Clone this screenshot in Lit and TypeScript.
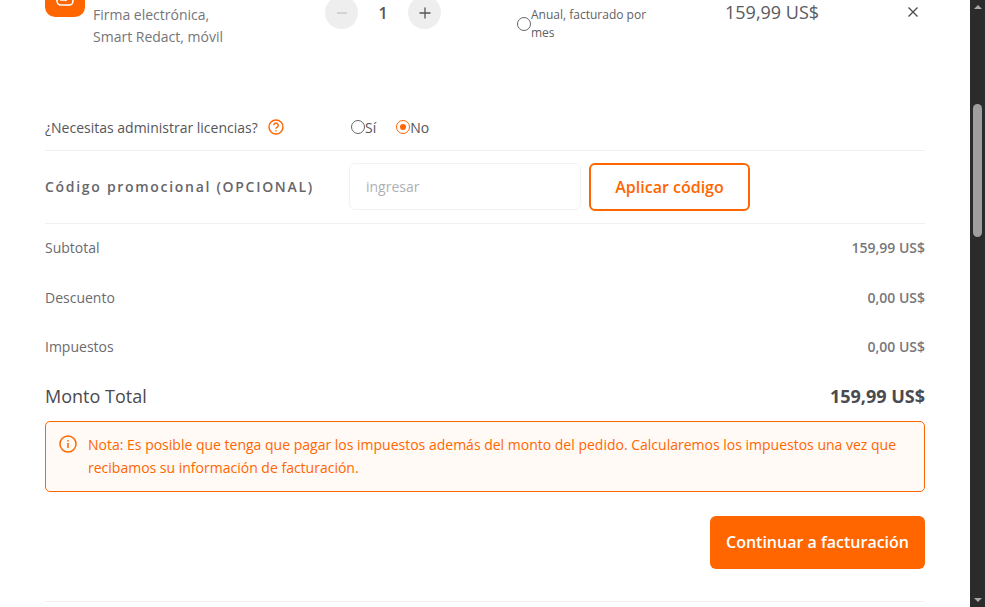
import { LitElement, html, css } from "lit";
import { customElement } from "lit/decorators.js";

@customElement("app-root")
export class AppRoot extends LitElement {
  static styles = css`
    :host { display: flex; width: 985px; height: 607px; overflow: hidden; background: #fff; font-family: "Open Sans", sans-serif; color: #4a4a4f; }
    * { box-sizing: border-box; }
    .page { width: 970px; height: 607px; padding: 0 45px; overflow: hidden; flex: none; }
    .item { height: 104px; display: flex; align-items: flex-start; overflow: visible; }
    .logo { width: 40px; height: 40px; margin-top: -23px; border-radius: 10px; background: #ff6600; flex: none; display: flex; align-items: flex-end; justify-content: center; padding-bottom: 11px; }
    .desc { width: 232px; margin: 4px 0 0 8px; font-size: 14px; line-height: 22px; color: #75757a; flex: none; }
    .qty { display: flex; align-items: center; margin-top: -4px; width: 192px; flex: none; }
    .qbtn { width: 33px; height: 33px; border-radius: 50%; background: #eeeeee; display: flex; align-items: center; justify-content: center; flex: none; }
    .qval { width: 50px; text-align: center; font-size: 16px; font-weight: 600; color: #55555a; }
    .plan { display: flex; align-items: center; width: 208px; flex: none; margin-top: 6px; font-size: 12px; line-height: 18px; color: #5f5f64; }
    .plan span { width: 125px; }
    .radio { width: 14px; height: 14px; border-radius: 50%; border: 1px solid #66666b; flex: none; background: #fff; }
    .price { width: 182px; flex: none; font-size: 18px; line-height: 24px; color: #5a5a5f; }
    .close { flex: none; margin-top: 6px; display: flex; }
    .lic { height: 47px; display: flex; align-items: center; border-bottom: 1px solid #f0f0f0; font-size: 14px; color: #55555a; }
    .lic-label { width: 306px; display: flex; align-items: center; gap: 10px; flex: none; }
    .opt { display: flex; align-items: center; margin-right: 20px; }
    .radio.on { border-color: #ff6600; display: flex; align-items: center; justify-content: center; }
    .radio.on::after { content: ""; width: 6px; height: 6px; border-radius: 50%; background: #ff6600; }
    .promo { height: 73px; display: flex; align-items: flex-start; padding-top: 12px; border-bottom: 1px solid #f0f0f0; }
    .promo-label { width: 304px; flex: none; align-self: center; margin-top: -14px; font-size: 14px; font-weight: 600; letter-spacing: 1.7px; color: #66666b; }
    .input { width: 232px; height: 47px; border: 1px solid #f2f2f2; border-radius: 6px; padding-left: 16px; display: flex; align-items: center; font-size: 14px; color: #b0b0b4; flex: none; }
    .apply { width: 161px; height: 48px; margin-left: 8px; border: 2px solid #ff6600; border-radius: 6px; color: #ff6600; font-size: 16px; font-weight: 600; display: flex; align-items: center; justify-content: center; flex: none; }
    .rows { margin-top: -1px; }
    .row { height: 49.5px; display: flex; align-items: center; justify-content: space-between; font-size: 14px; color: #6b6b70; }
    .row b { font-size: 14px; font-weight: 600; color: #77777c; }
    .row.total { height: 49px; font-size: 18px; color: #4a4a4f; }
    .row.total b { font-size: 18px; font-weight: 700; color: #4a4a4f; }
    .note { height: 71px; border: 1px solid #ff6600; border-radius: 5px; background: #fffaf6; display: flex; gap: 11px; padding: 11px 12px 0 13px; font-size: 14px; line-height: 23px; color: #ff6600; }
    .note svg { flex: none; margin-top: 2px; }
    .actions { display: flex; justify-content: flex-end; padding-top: 24px; height: 110px; border-bottom: 1px solid #f0f0f0; }
    .go { width: 215px; height: 53px; background: #ff6600; border-radius: 6px; color: #fff; font-size: 16px; font-weight: 600; display: flex; align-items: center; justify-content: center; }
    .bar { width: 15px; height: 607px; background: #2b2b2b; flex: none; display: flex; flex-direction: column; align-items: center; justify-content: space-between; padding: 5px 0; }
    .thumb { width: 9px; height: 133px; border-radius: 5px; background: #9f9f9f; margin-top: 95px; }
    .grow { flex: 1; }
    .arrow { width: 0; height: 0; border-left: 4px solid transparent; border-right: 4px solid transparent; }
    .arrow.up { border-bottom: 4px solid #a8a8a8; }
    .arrow.down { border-top: 4px solid #a8a8a8; }
  `;

  render() {
    return html`
      <div class="page">
        <div class="item">
          <div class="logo">
            <svg width="20" height="14" viewBox="0 0 20 14" fill="none" stroke="#fff" stroke-width="1.6"><path d="M2 0v9a4 4 0 0 0 4 4h8a4 4 0 0 0 4-4V0"/><path d="M5 8h6M14 3l-3.500 6"/></svg>
          </div>
          <div class="desc">Firma electrónica,<br />Smart Redact, móvil</div>
          <div class="qty">
            <div class="qbtn"><svg width="12" height="12" viewBox="0 0 12 12" stroke="#c4c4c4" stroke-width="1.3"><path d="M1 6h10"/></svg></div>
            <div class="qval">1</div>
            <div class="qbtn"><svg width="12" height="12" viewBox="0 0 12 12" stroke="#55555a" stroke-width="1.3"><path d="M0.500 6h11M6 .5v11"/></svg></div>
          </div>
          <div class="plan"><div class="radio"></div><span>Anual, facturado por mes</span></div>
          <div class="price">159,99 US$</div>
          <div class="close"><svg width="12" height="12" viewBox="0 0 12 12" stroke="#4a4a4f" stroke-width="1.3"><path d="M1.500 1.500l9 9M10.500 1.500l-9 9"/></svg></div>
        </div>
        <div class="lic">
          <div class="lic-label">¿Necesitas administrar licencias?
            <svg width="16" height="16" viewBox="0 0 16 16" fill="none" stroke="#ff6600" stroke-width="1.4"><circle cx="8" cy="8" r="7"/><path d="M5.800 6.200a2.200 2.200 0 1 1 3.400 1.900c-.8.500-1.200.9-1.200 1.700"/><path d="M8 11.200v1.200"/></svg>
          </div>
          <div class="opt"><div class="radio"></div>Sí</div>
          <div class="opt"><div class="radio on"></div>No</div>
        </div>
        <div class="promo">
          <div class="promo-label">Código promocional (OPCIONAL)</div>
          <div class="input">ingresar</div>
          <div class="apply">Aplicar código</div>
        </div>
        <div class="rows">
          <div class="row"><span>Subtotal</span><b>159,99 US$</b></div>
          <div class="row"><span>Descuento</span><b>0,00 US$</b></div>
          <div class="row"><span>Impuestos</span><b>0,00 US$</b></div>
          <div class="row total"><span>Monto Total</span><b>159,99 US$</b></div>
        </div>
        <div class="note">
          <svg width="18" height="18" viewBox="0 0 18 18" fill="none" stroke="#ff6600" stroke-width="1.5"><circle cx="9" cy="9" r="8"/><path d="M9 5v1.500M9 8v5"/></svg>
          <div>Nota: Es posible que tenga que pagar los impuestos además del monto del pedido. Calcularemos los impuestos una vez que recibamos su información de facturación.</div>
        </div>
        <div class="actions"><div class="go">Continuar a facturación</div></div>
      </div>
      <div class="bar">
        <div class="arrow up"></div>
        <div class="thumb"></div>
        <div class="grow"></div>
        <div class="arrow down"></div>
      </div>
    `;
  }
}
